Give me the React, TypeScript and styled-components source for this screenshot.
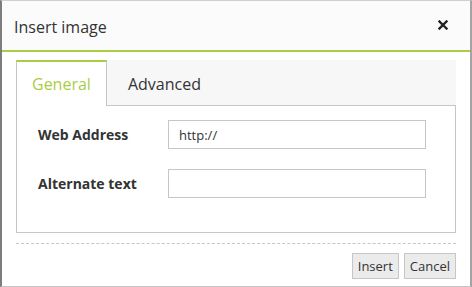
import React, { useState } from 'react';
import styled, { createGlobalStyle } from 'styled-components';

const GlobalStyle = createGlobalStyle`
    html, body {
        margin: 0;
        padding: 0;
        background: #ffffff;
    }
    body {
        font-family: 'Open Sans', 'Noto Sans', sans-serif;
        color: #333333;
    }
`;

const green = '#a9cd45';
const line = '#c6c6c6';

function App() {
    const [tab, setTab] = useState<'general' | 'advanced'>('general');
    const [url, setUrl] = useState<string>('http://');
    const [alt, setAlt] = useState<string>('');

    return (
        <>
            <GlobalStyle />
            <Window>
                <TitleBar>
                    <Title>Insert image</Title>
                    <CloseButton aria-label="Close">
                        <svg width="10" height="10" viewBox="0 0 10 10">
                            <path d="M1.5 1.5 L8.5 8.5 M8.5 1.5 L1.5 8.5" stroke="#222" strokeWidth="2.4" strokeLinecap="square" />
                        </svg>
                    </CloseButton>
                </TitleBar>
                <Body>
                    <TabStrip>
                        <Tab $active={tab === 'general'} onClick={() => setTab('general')}>
                            General
                        </Tab>
                        <Tab $active={tab === 'advanced'} onClick={() => setTab('advanced')}>
                            Advanced
                        </Tab>
                    </TabStrip>
                    <Panel>
                        <Row>
                            <Label>Web Address</Label>
                            <Input value={url} onChange={(e) => setUrl(e.target.value)} />
                        </Row>
                        <Row>
                            <Label>Alternate text</Label>
                            <Input value={alt} onChange={(e) => setAlt(e.target.value)} />
                        </Row>
                    </Panel>
                    <Separator />
                    <Actions>
                        <Button>Insert</Button>
                        <Button>Cancel</Button>
                    </Actions>
                </Body>
            </Window>
        </>
    );
}

export default App;

const Window = styled.div`
    box-sizing: border-box;
    width: 472px;
    height: 287px;
    border-left: 2px solid #7d7d7d;
    border-right: 2px solid #a3a3a3;
    border-top: 1px solid #cfcfcf;
    border-bottom: 1px solid #c4c4c4;
    display: flex;
    flex-direction: column;
    background: #ffffff;
`;

const TitleBar = styled.div`
    height: 49px;
    flex-shrink: 0;
    background: #fbfbfb;
    border-bottom: 2px solid ${green};
    display: flex;
    align-items: center;
    justify-content: space-between;
    padding: 0 22px 0 12px;
`;

const Title = styled.div`
    font-size: 16px;
    color: #333333;
    margin-top: 2px;
`;

const CloseButton = styled.div`
    display: flex;
    align-items: center;
    margin-top: -2px;
`;

const Body = styled.div`
    padding: 8px 14px 0 14px;
    display: flex;
    flex-direction: column;
`;

const TabStrip = styled.div`
    display: flex;
    height: 45px;
    background: #f7f7f7;
    border-bottom: 1px solid ${line};
`;

const Tab = styled.div<{ $active?: boolean }>`
    box-sizing: border-box;
    height: ${(p) => (p.$active ? '46px' : '45px')};
    margin-bottom: ${(p) => (p.$active ? '-1px' : '0')};
    padding: ${(p) => (p.$active ? '0 15px' : '0 20px')};
    display: flex;
    align-items: center;
    font-size: 16px;
    cursor: pointer;
    color: ${(p) => (p.$active ? green : '#333333')};
    background: ${(p) => (p.$active ? '#ffffff' : 'transparent')};
    border-top: 2px solid ${(p) => (p.$active ? green : 'transparent')};
    border-left: 1px solid ${(p) => (p.$active ? line : 'transparent')};
    border-right: 1px solid ${(p) => (p.$active ? line : 'transparent')};
`;

const Panel = styled.div`
    box-sizing: border-box;
    height: 127px;
    border: 1px solid ${line};
    border-top: none;
    padding: 14px 29px 0 21px;
    display: flex;
    flex-direction: column;
    gap: 20px;
`;

const Row = styled.div`
    display: flex;
    align-items: center;
`;

const Label = styled.div`
    width: 130px;
    font-size: 14px;
    font-weight: 700;
    color: #333333;
`;

const Input = styled.input`
    box-sizing: border-box;
    width: 258px;
    height: 29px;
    border: 1px solid ${line};
    padding: 0 10px;
    font-family: inherit;
    font-size: 13px;
    color: #333333;
    outline: none;
`;

const Separator = styled.div`
    margin-top: 10px;
    height: 0;
    border-top: 1px dashed ${line};
`;

const Actions = styled.div`
    display: flex;
    justify-content: flex-end;
    gap: 5px;
    margin-top: 9px;
`;

const Button = styled.button`
    box-sizing: border-box;
    height: 26px;
    padding: 0 5px;
    background: #ebebeb;
    border: 1px solid ${line};
    font-family: inherit;
    font-size: 13px;
    color: #333333;
    cursor: pointer;
`;
